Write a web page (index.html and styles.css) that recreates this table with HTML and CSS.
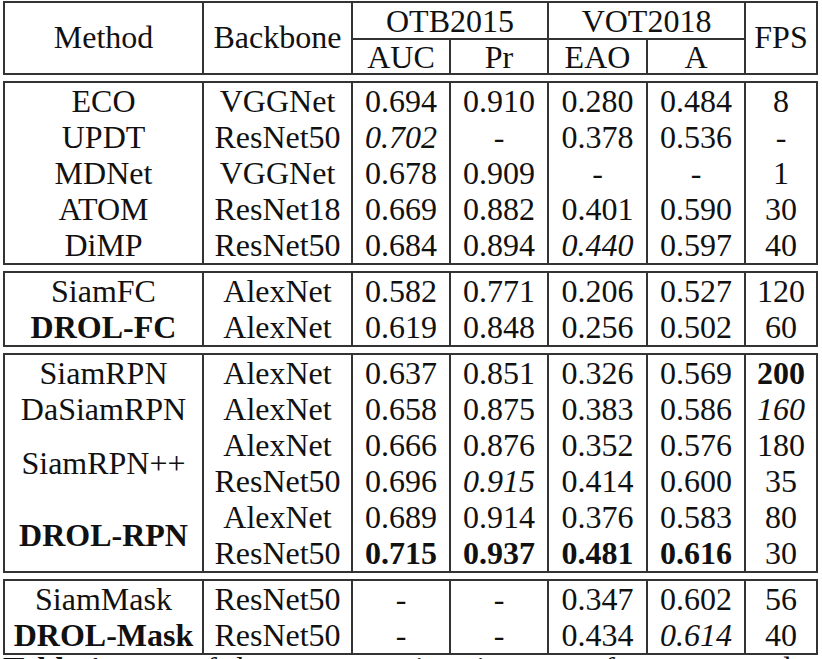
FILE: index.html
```html
<!DOCTYPE html>
<html>
<head>
<meta charset="utf-8">
<link rel="stylesheet" href="styles.css">
</head>
<body>
<div class="page">
  <table class="tbl head">
    <colgroup><col class="c1"><col class="c2"><col class="c3"><col class="c4"><col class="c5"><col class="c6"><col class="c7"></colgroup>
    <tr class="h1">
      <td rowspan="2">Method</td>
      <td rowspan="2">Backbone</td>
      <td colspan="2">OTB2015</td>
      <td colspan="2">VOT2018</td>
      <td rowspan="2">FPS</td>
    </tr>
    <tr class="h2">
      <td>AUC</td><td>Pr</td><td>EAO</td><td>A</td>
    </tr>
  </table>

  <table class="tbl block">
    <colgroup><col class="c1"><col class="c2"><col class="c3"><col class="c4"><col class="c5"><col class="c6"><col class="c7"></colgroup>
    <tr><td>ECO</td><td>VGGNet</td><td>0.694</td><td>0.910</td><td>0.280</td><td>0.484</td><td>8</td></tr>
    <tr><td>UPDT</td><td>ResNet50</td><td><i>0.702</i></td><td>-</td><td>0.378</td><td>0.536</td><td>-</td></tr>
    <tr><td>MDNet</td><td>VGGNet</td><td>0.678</td><td>0.909</td><td>-</td><td>-</td><td>1</td></tr>
    <tr><td>ATOM</td><td>ResNet18</td><td>0.669</td><td>0.882</td><td>0.401</td><td>0.590</td><td>30</td></tr>
    <tr><td>DiMP</td><td>ResNet50</td><td>0.684</td><td>0.894</td><td><i>0.440</i></td><td>0.597</td><td>40</td></tr>
  </table>

  <table class="tbl block">
    <colgroup><col class="c1"><col class="c2"><col class="c3"><col class="c4"><col class="c5"><col class="c6"><col class="c7"></colgroup>
    <tr><td>SiamFC</td><td>AlexNet</td><td>0.582</td><td>0.771</td><td>0.206</td><td>0.527</td><td>120</td></tr>
    <tr><td><b>DROL-FC</b></td><td>AlexNet</td><td>0.619</td><td>0.848</td><td>0.256</td><td>0.502</td><td>60</td></tr>
  </table>

  <table class="tbl block">
    <colgroup><col class="c1"><col class="c2"><col class="c3"><col class="c4"><col class="c5"><col class="c6"><col class="c7"></colgroup>
    <tr><td>SiamRPN</td><td>AlexNet</td><td>0.637</td><td>0.851</td><td>0.326</td><td>0.569</td><td><b>200</b></td></tr>
    <tr><td>DaSiamRPN</td><td>AlexNet</td><td>0.658</td><td>0.875</td><td>0.383</td><td>0.586</td><td><i>160</i></td></tr>
    <tr><td rowspan="2">SiamRPN++</td><td>AlexNet</td><td>0.666</td><td>0.876</td><td>0.352</td><td>0.576</td><td>180</td></tr>
    <tr><td>ResNet50</td><td>0.696</td><td><i>0.915</i></td><td>0.414</td><td>0.600</td><td>35</td></tr>
    <tr><td rowspan="2"><b>DROL-RPN</b></td><td>AlexNet</td><td>0.689</td><td>0.914</td><td>0.376</td><td>0.583</td><td>80</td></tr>
    <tr><td>ResNet50</td><td><b>0.715</b></td><td><b>0.937</b></td><td><b>0.481</b></td><td><b>0.616</b></td><td>30</td></tr>
  </table>

  <table class="tbl block">
    <colgroup><col class="c1"><col class="c2"><col class="c3"><col class="c4"><col class="c5"><col class="c6"><col class="c7"></colgroup>
    <tr><td>SiamMask</td><td>ResNet50</td><td>-</td><td>-</td><td>0.347</td><td>0.602</td><td>56</td></tr>
    <tr><td><b>DROL-Mask</b></td><td>ResNet50</td><td>-</td><td>-</td><td>0.434</td><td><i>0.614</i></td><td>40</td></tr>
  </table>

  <p class="caption"><b>Table 1:</b> state-of-the-art comparison in terms of accuracy and speed</p>
</div>
</body>
</html>
```

FILE: styles.css
```css
html, body {
  margin: 0;
  padding: 0;
  background: #ffffff;
}
body {
  width: 822px;
  height: 659px;
  overflow: hidden;
}
.page {
  padding: 1px 0 0 3px;
  font-family: "Liberation Serif", "Times New Roman", serif;
  font-size: 32px;
  color: #111111;
}
.tbl {
  border-collapse: collapse;
  table-layout: fixed;
  width: 815px;
  border-top: 2px solid #333333;
  border-bottom: 2px solid #333333;
}
.tbl col.c1 { width: 199px; }
.tbl col.c2 { width: 149px; }
.tbl col.c3 { width: 98px; }
.tbl col.c4 { width: 98px; }
.tbl col.c5 { width: 99px; }
.tbl col.c6 { width: 98px; }
.tbl col.c7 { width: 72px; }
.tbl td {
  border-left: 2px solid #333333;
  border-right: 2px solid #333333;
  padding: 0;
  text-align: center;
  white-space: nowrap;
  line-height: 32px;
}
.head .h1 td { height: 35px; vertical-align: middle; }
.head .h2 td { height: 33px; border-top: 2px solid #333333; }
.head .h1 td[rowspan] { padding-bottom: 2px; }
.block {
  margin-top: 6px;
}
.block tr td { height: 36px; }
.caption {
  margin: -3px 0 0 0;
  line-height: 32px;
  white-space: nowrap;
}
```
